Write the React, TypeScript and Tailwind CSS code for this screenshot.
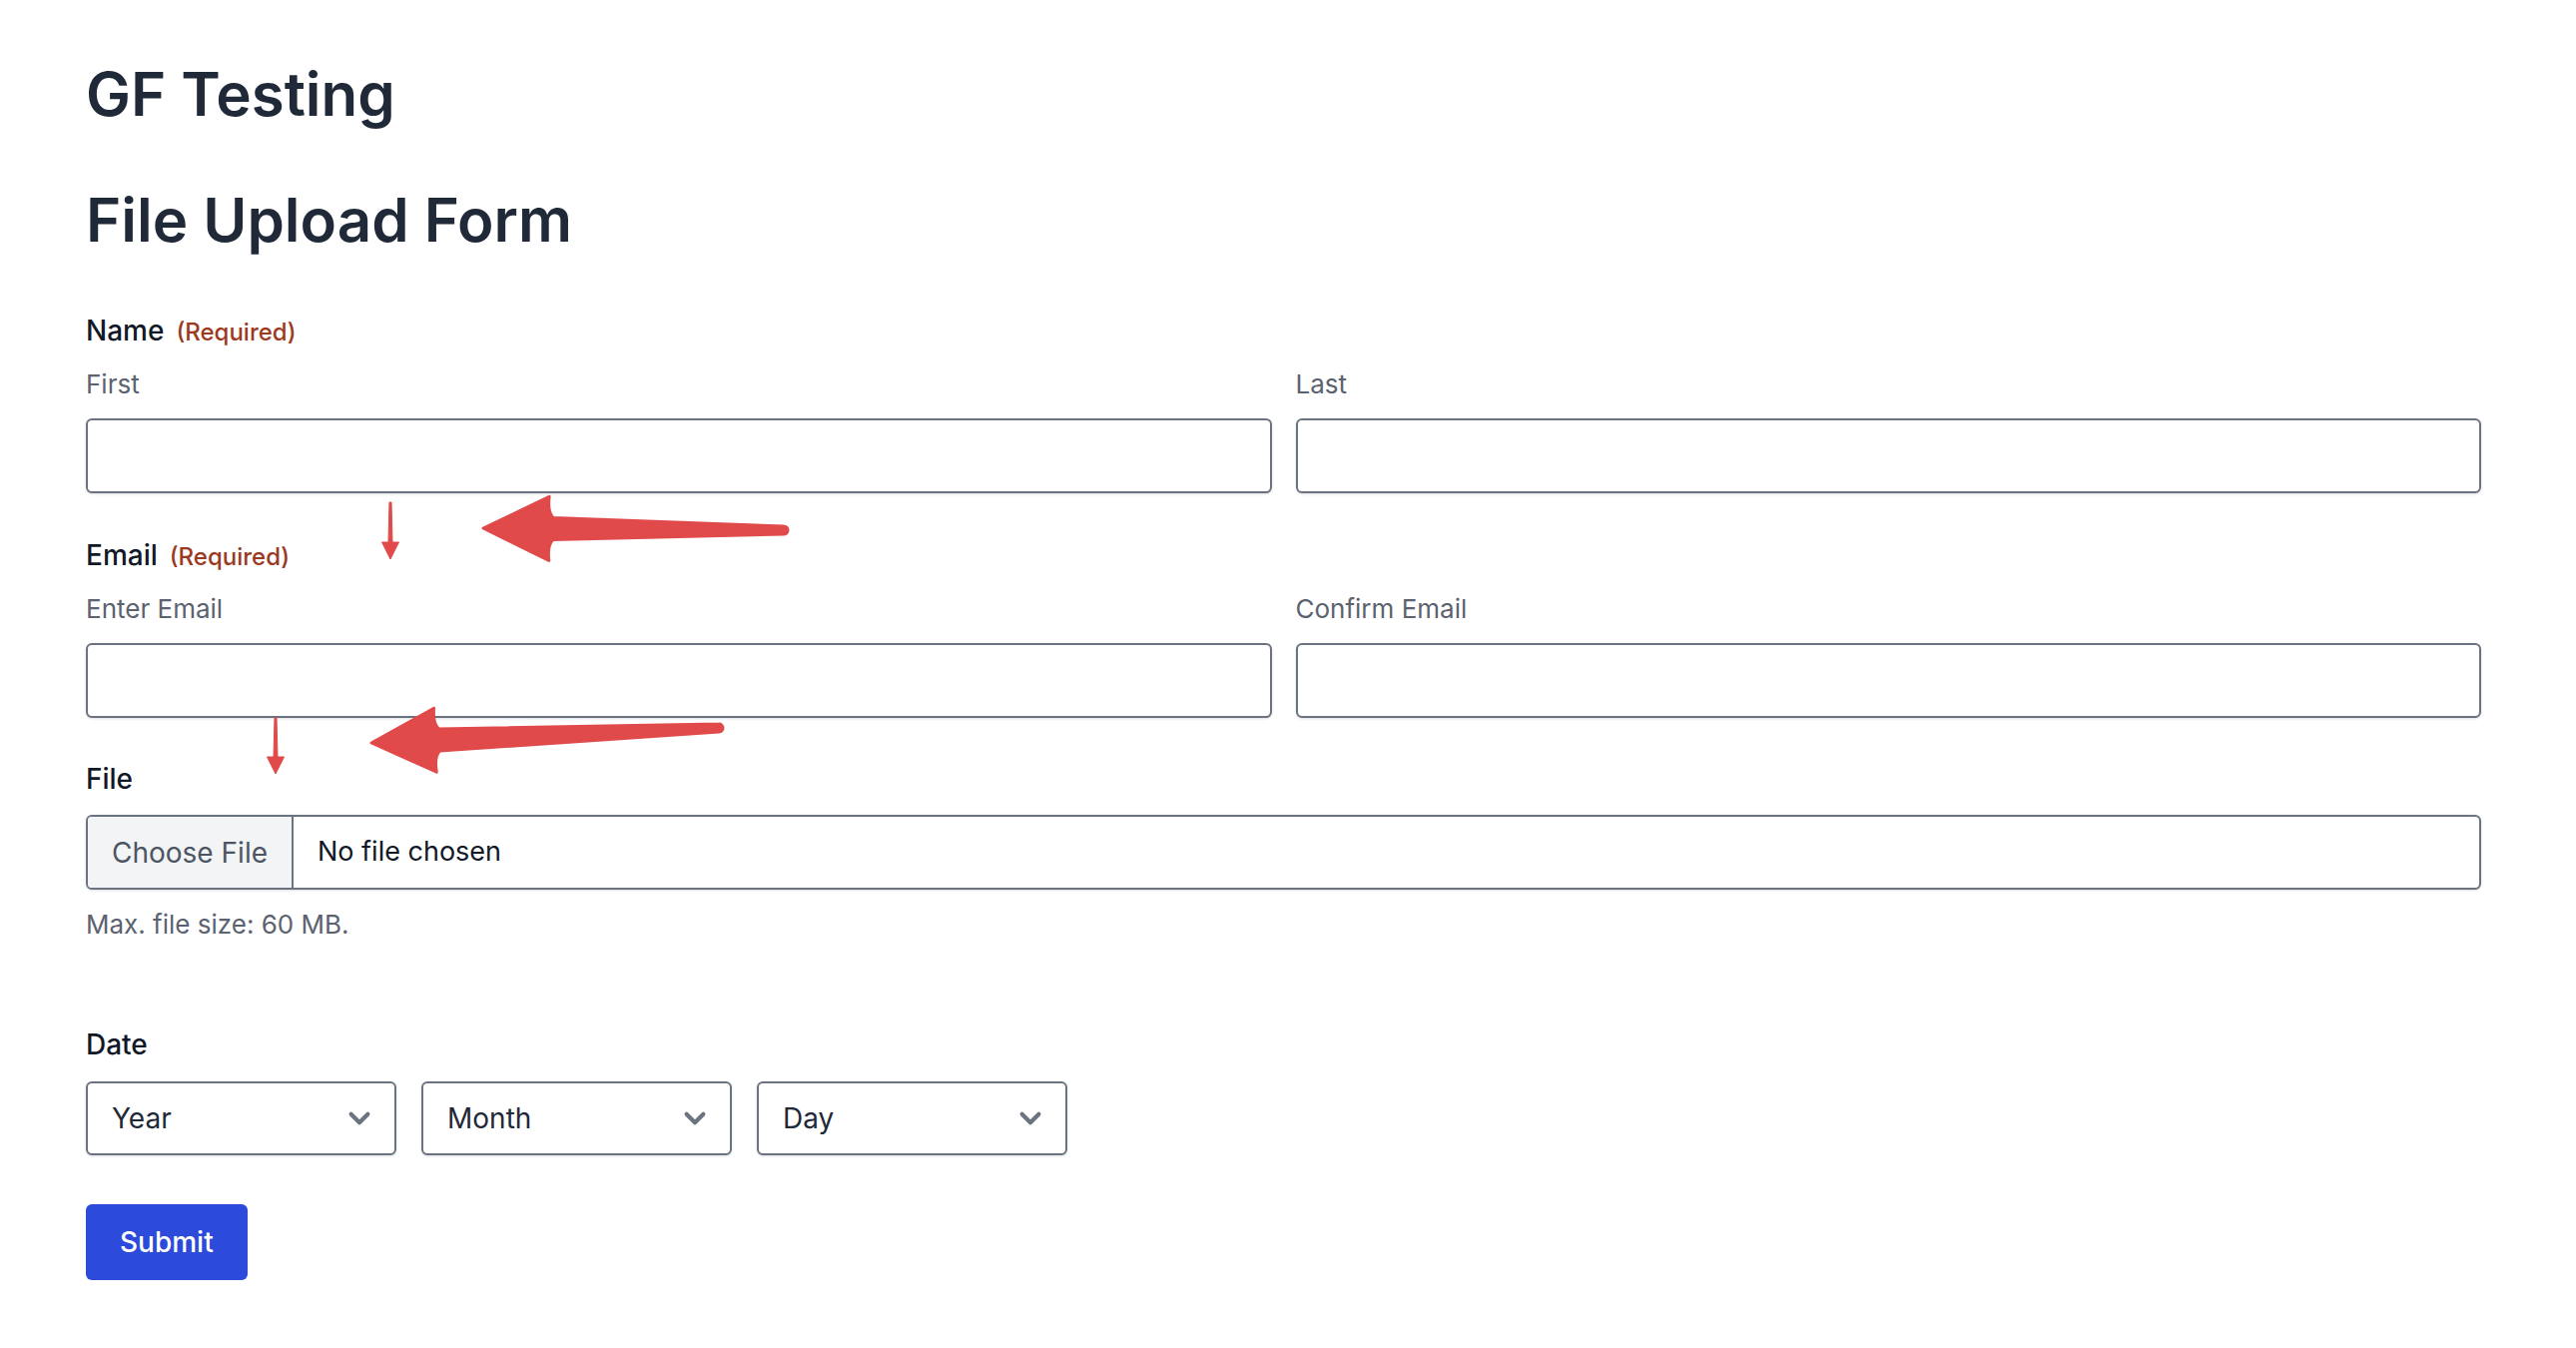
import React from 'react';

type Pt = [number, number];

// big markup arrow: triangle head + tapering shaft with round tail
function bigArrowPath(tip: Pt, tail: Pt, headLen: number, headHalf: number, shaftNear: number, shaftTail: number) {
  const dx = tail[0] - tip[0];
  const dy = tail[1] - tip[1];
  const len = Math.hypot(dx, dy);
  const ux = dx / len;
  const uy = dy / len;
  const nx = -uy;
  const ny = ux;
  const at = (d: number, o: number): string =>
    `${(tip[0] + ux * d + nx * o).toFixed(1)} ${(tip[1] + uy * d + ny * o).toFixed(1)}`;
  const tailAt = (o: number): string => `${(tail[0] + nx * o).toFixed(1)} ${(tail[1] + ny * o).toFixed(1)}`;
  const r = shaftTail / 2;
  return [
    `M ${at(0, 0)}`,
    `L ${at(headLen, -headHalf)}`,
    `Q ${at(headLen - 2, -shaftNear / 2 - 6)} ${at(headLen + 4, -shaftNear / 2)}`,
    `L ${tailAt(-r)}`,
    `A ${r} ${r} 0 0 1 ${tailAt(r)}`,
    `L ${at(headLen + 4, shaftNear / 2)}`,
    `Q ${at(headLen - 2, shaftNear / 2 + 6)} ${at(headLen, headHalf)}`,
    'Z',
  ].join(' ');
}

function smallArrowPath(x: number, top: number, bottom: number) {
  const headH = 17;
  const headW = 17;
  const hb = bottom - headH;
  return [
    `M ${x - 1} ${top}`,
    `L ${x + 1} ${top}`,
    `L ${x + 2} ${hb}`,
    `L ${x + headW / 2} ${hb}`,
    `L ${x} ${bottom}`,
    `L ${x - headW / 2} ${hb}`,
    `L ${x - 2} ${hb}`,
    'Z',
  ].join(' ');
}

function Annotations() {
  const red = '#e14a4a';
  return (
    <svg className="absolute top-0 left-0 pointer-events-none" width="2580" height="1350" viewBox="0 0 2580 1350">
      <g fill={red} stroke={red} strokeWidth="3" strokeLinejoin="round">
        <path d={bigArrowPath([484, 529], [785, 531], 66, 32, 22, 8)} />
        <path d={bigArrowPath([372, 744], [720, 729], 64, 32, 22, 8)} />
        <path d={smallArrowPath(391, 503, 560)} strokeWidth="1" />
        <path d={smallArrowPath(276, 719, 775)} strokeWidth="1" />
      </g>
    </svg>
  );
}

function Chevron() {
  return (
    <svg className="absolute right-[16px] top-1/2 -translate-y-1/2 pointer-events-none" width="42" height="42" viewBox="0 0 20 20" fill="none">
      <path d="M6 8l4 4 4-4" stroke="#6b7280" strokeWidth="2" strokeLinecap="round" strokeLinejoin="round" />
    </svg>
  );
}

function DateSelect({ label }: { label: string }) {
  return (
    <div className="relative w-[311px]">
      <select className="appearance-none w-full h-[74px] border-2 border-[#6b7280] rounded-[6px] bg-white pl-[24px] pr-[60px] text-[28px] text-[#1f2937] shadow-sm outline-none">
        <option>{label}</option>
      </select>
      <Chevron />
    </div>
  );
}

const inputCls =
  'block w-full h-[75px] mt-[16px] border-2 border-[#6b7280] rounded-[6px] bg-white px-[24px] text-[28px] text-[#1f2937] shadow-sm outline-none';

export default function App() {
  return (
    <div className="relative min-h-screen bg-white font-['Inter',sans-serif]">
      <div className="pl-[86px] pt-[58px] w-[2485px]">
        <h1 className="text-[60px] leading-[72px] font-semibold text-[#1f2937]">GF Testing</h1>
        <h2 className="mt-[54px] text-[60px] leading-[72px] font-semibold text-[#1f2937]">File Upload Form</h2>

        <form className="mt-[55px]" onSubmit={(e) => e.preventDefault()}>
          {/* Name */}
          <fieldset>
            <legend className="flex items-baseline h-[40px] leading-[40px] text-[28px] font-medium text-[#111827]">
              Name<span className="ml-[12px] text-[24px] font-medium text-[#9b3a1f]">(Required)</span>
            </legend>
            <div className="grid grid-cols-2 gap-[24px]">
              <div>
                <label className="block mt-[16px] h-[36px] leading-[36px] text-[26px] text-[#5b6270]">First</label>
                <input type="text" className={inputCls} />
              </div>
              <div>
                <label className="block mt-[16px] h-[36px] leading-[36px] text-[26px] text-[#5b6270]">Last</label>
                <input type="text" className={inputCls} />
              </div>
            </div>
          </fieldset>

          {/* Email */}
          <fieldset className="mt-[42px]">
            <legend className="flex items-baseline h-[40px] leading-[40px] text-[28px] font-medium text-[#111827]">
              Email<span className="ml-[12px] text-[24px] font-medium text-[#9b3a1f]">(Required)</span>
            </legend>
            <div className="grid grid-cols-2 gap-[24px]">
              <div>
                <label className="block mt-[16px] h-[36px] leading-[36px] text-[26px] text-[#5b6270]">Enter Email</label>
                <input type="email" className={inputCls} />
              </div>
              <div>
                <label className="block mt-[16px] h-[36px] leading-[36px] text-[26px] text-[#5b6270]">Confirm Email</label>
                <input type="email" className={inputCls} />
              </div>
            </div>
          </fieldset>

          {/* File */}
          <div className="mt-[41px]">
            <div className="h-[40px] leading-[40px] text-[28px] font-medium text-[#111827]">File</div>
            <label className="mt-[16px] flex h-[75px] border-2 border-[#6b7280] rounded-[6px] overflow-hidden bg-white shadow-sm cursor-pointer">
              <span className="flex items-center px-[24px] bg-[#f3f4f6] border-r-2 border-[#6b7280] text-[28px] text-[#4b5563]">
                Choose File
              </span>
              <span className="flex items-center pl-[24px] text-[27px] text-[#111827]">No file chosen</span>
              <input type="file" className="hidden" />
            </label>
            <div className="mt-[17px] h-[36px] leading-[36px] text-[26px] text-[#5b6270]">Max. file size: 60 MB.</div>
          </div>

          {/* Date */}
          <div className="mt-[82px]">
            <div className="h-[40px] leading-[40px] text-[28px] font-medium text-[#111827]">Date</div>
            <div className="mt-[17px] flex gap-[25px]">
              <DateSelect label="Year" />
              <DateSelect label="Month" />
              <DateSelect label="Day" />
            </div>
          </div>

          <button
            type="submit"
            className="mt-[49px] h-[76px] px-[34px] rounded-[6px] bg-[#2c4bdb] text-white text-[28px] font-medium"
          >
            Submit
          </button>
        </form>
      </div>
      <Annotations />
    </div>
  );
}
